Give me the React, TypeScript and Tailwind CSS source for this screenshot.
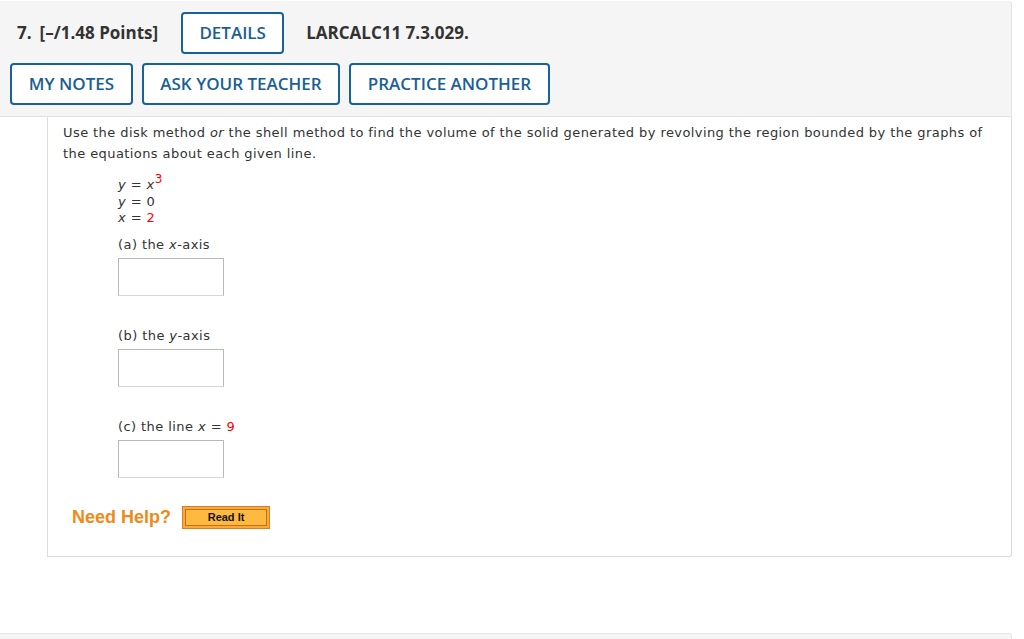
import React from "react";

const btn =
  "h-[42px] flex items-center justify-center border-2 border-[#15639a] rounded-[4px] bg-white text-[#1a5f93] text-[17px] font-semibold";

function Input() {
  return <div className="w-[106px] h-[38px] border border-[#b9b9b9] border-b-[#d8d8d8] bg-white" />;
}

export default function App() {
  return (
    <div className="w-[1024px] h-[639px] bg-white overflow-hidden relative font-['Open_Sans',sans-serif]">
      <div className="w-[1012px] pt-[1px]">
        <div className="bg-[#f5f5f5] border-r border-[#e3e3e3] rounded-tr-[3px] border-b border-b-[#e2e2e2] h-[116px] pl-[10px] pt-[11px]">
          <div className="flex items-center h-[42px]">
            <span className="ml-[7px] font-bold text-[17px] text-[#333]">7.</span>
            <span className="ml-[8px] font-bold text-[17px] text-[#333]">[–/1.48 Points]</span>
            <div className={btn + " ml-[23px] w-[103px]"}>DETAILS</div>
            <span className="ml-[22px] font-bold text-[17px] text-[#333]">LARCALC11 7.3.029.</span>
          </div>
          <div className="flex items-center gap-[9px] mt-[9px]">
            <div className={btn + " w-[123px]"}>MY NOTES</div>
            <div className={btn + " w-[198px]"}>ASK YOUR TEACHER</div>
            <div className={btn + " w-[201px]"}>PRACTICE ANOTHER</div>
          </div>
        </div>
        <div className="ml-[47px] border-l border-b border-r border-[#dcdcdc] rounded-br-[3px] h-[440px] pl-[15px] pt-[5px] text-[#333] font-['DejaVu_Sans',Verdana,sans-serif] tracking-[0.42px]">
          <p className="text-[13px] leading-[21px] pr-[10px]">
            Use the disk method <i>or</i> the shell method to find the volume of the solid generated by revolving the region bounded by the graphs of the equations about each given line.
          </p>
          <div className="ml-[55px] mt-[13px] text-[13px] leading-[16.5px]">
            <div>
              <i>y</i> = <i>x</i>
              <sup className="text-[#ff0000] text-[12px] relative top-[-6px]">3</sup>
            </div>
            <div>
              <i>y</i> = 0
            </div>
            <div>
              <i>x</i> = <span className="text-[#ff0000]">2</span>
            </div>
          </div>
          <div className="ml-[55px] mt-[9px] text-[13px] leading-[17px]">
            <div>
              (a) the <i>x</i>-axis
            </div>
            <div className="mt-[5px]">
              <Input />
            </div>
            <div className="mt-[31px]">
              (b) the <i>y</i>-axis
            </div>
            <div className="mt-[5px]">
              <Input />
            </div>
            <div className="mt-[31px]">
              (c) the line <i>x</i> = <span className="text-[#ff0000]">9</span>
            </div>
            <div className="mt-[5px]">
              <Input />
            </div>
          </div>
          <div className="flex items-center ml-[9px] mt-[26px] tracking-normal font-['Liberation_Sans',Arial,sans-serif]">
            <span className="text-[#ef8a1a] font-bold text-[18px]">Need Help?</span>
            <div className="ml-[11px] w-[88px] h-[23px] bg-[#f9a93a] border border-[#d98026] p-[2px]">
              <div className="w-full h-full border border-[#c47019] bg-[#fdb940] flex items-center justify-center text-[11px] font-bold text-[#111]">
                Read It
              </div>
            </div>
          </div>
        </div>
      </div>
      <div className="absolute left-0 top-[633px] w-[1012px] h-[20px] bg-[#f5f5f5] border-t border-r border-[#e6e6e6] rounded-tr-[3px]" />
    </div>
  );
}
